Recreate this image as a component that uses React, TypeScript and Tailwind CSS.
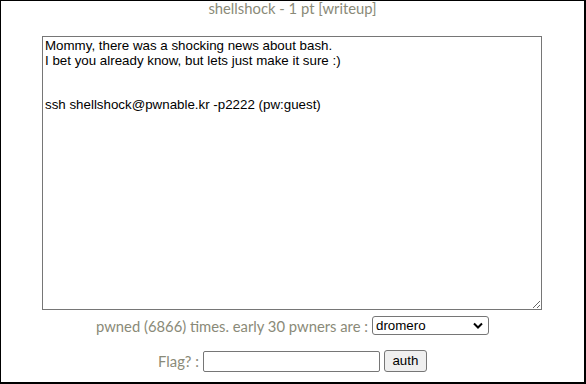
const message = `Mommy, there was a shocking news about bash.
I bet you already know, but lets just make it sure :)


ssh shellshock@pwnable.kr -p2222 (pw:guest)`;

function Chevron() {
  return (
    <svg
      width="10"
      height="7"
      viewBox="0 0 10 7"
      className="pointer-events-none absolute right-[6px] top-[6px]"
    >
      <path d="M1 1.5 L5 5.5 L9 1.5" fill="none" stroke="#000" strokeWidth="2" />
    </svg>
  );
}

export default function App() {
  return (
    <div className="flex h-[384px] w-[586px] flex-col items-center overflow-hidden border-t border-r-2 border-b-2 border-l border-black bg-white font-['Lato',sans-serif] text-[14.8px] text-[#8a8a78]">
      <div className="h-[16px] leading-[14px]">shellshock - 1 pt [writeup]</div>

      <textarea
        readOnly
        defaultValue={message}
        className="mt-[19px] ml-[41px] h-[274px] w-[500px] resize self-start border border-[#767676] bg-white px-[2px] pt-[2px] pb-[2px] font-['Liberation_Sans',Arial,sans-serif] text-[13.33px] leading-[14.75px] text-black outline-none"
      />

      <div className="mt-[6px] flex items-center gap-[4px] leading-[18px]">
        <span>pwned (6866) times. early 30 pwners are :</span>
        <div className="relative flex">
          <select
            defaultValue="dromero"
            className="h-[19px] w-[117px] appearance-none rounded-[3px] border border-[#767676] bg-white pl-[3px] font-['Liberation_Sans',Arial,sans-serif] text-[13.33px] leading-[17px] text-black outline-none"
          >
            <option>dromero</option>
          </select>
          <Chevron />
        </div>
      </div>

      <div className="mt-[15px] flex items-center gap-[4px] leading-[20px]">
        <span>Flag? :</span>
        <input
          type="text"
          className="h-[21px] w-[177px] rounded-[2px] border border-[#767676] bg-white px-[2px] font-['Liberation_Sans',Arial,sans-serif] text-[13.33px] text-black outline-none"
        />
        <button className="h-[22px] w-[43px] rounded-[3px] border border-[#767676] bg-[#efefef] font-['Liberation_Sans',Arial,sans-serif] text-[13.33px] text-black">
          auth
        </button>
      </div>
    </div>
  );
}
